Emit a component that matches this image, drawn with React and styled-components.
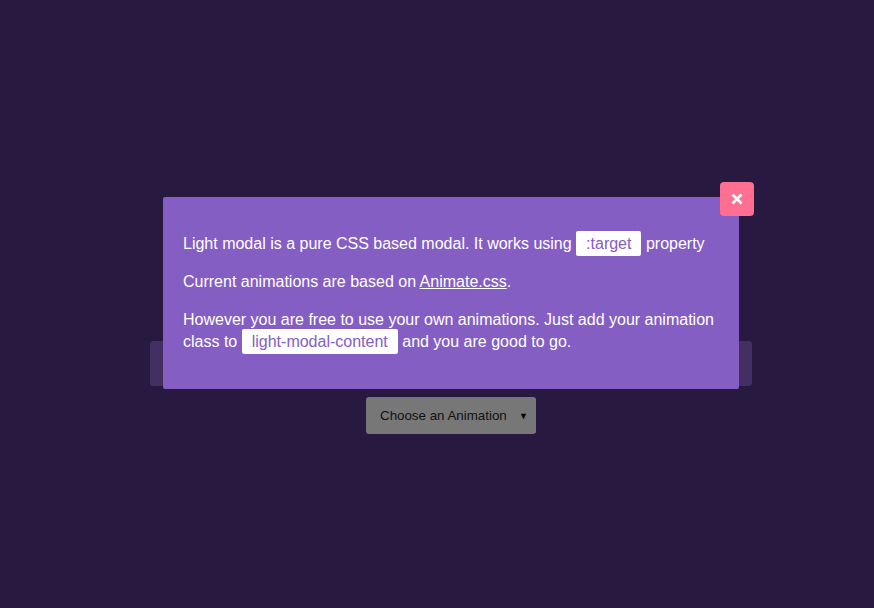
import styled, { createGlobalStyle } from 'styled-components';

const GlobalStyle = createGlobalStyle`
    html, body {
        margin: 0;
        padding: 0;
        height: 100%;
    }
    body {
        background: #27193f;
        font-family: "Liberation Sans", Arial, sans-serif;
    }
`;

const Page = styled.div`
    min-height: 608px;
    display: flex;
    flex-direction: column;
    align-items: center;
    padding: 341px 0 0 28px;
    box-sizing: border-box;
`;

const Panel = styled.div`
    width: 602px;
    height: 45px;
    background: #432f63;
    border-radius: 3px;
`;

const Select = styled.div`
    margin-top: 11px;
    width: 170px;
    height: 37px;
    box-sizing: border-box;
    padding: 0 8px 0 14px;
    display: flex;
    align-items: center;
    background: #777777;
    border-radius: 3px;
    color: #111;
    font-size: 13.33px;
`;

const Caret = styled.span`
    margin-left: auto;
    font-size: 9px;
    color: #000;
`;

const Overlay = styled.div`
    position: fixed;
    inset: 0;
    display: flex;
    align-items: center;
    justify-content: center;
    padding: 0 0 23px 28px;
`;

const Modal = styled.div`
    position: relative;
    width: 576px;
    box-sizing: border-box;
    padding: 20px;
    background: #845ec2;
    border-radius: 2px;
    color: #fff;
    font-size: 16px;
    line-height: 22px;

    p {
        margin: 16px 0;
    }
`;

const Close = styled.a`
    position: absolute;
    top: -15px;
    right: -15px;
    width: 34px;
    height: 34px;
    border-radius: 4px;
    background: #ff6f91;
    display: flex;
    align-items: center;
    justify-content: center;
`;

const Code = styled.code`
    font-family: "Liberation Sans", Arial, sans-serif;
    background: #fff;
    color: #845ec2;
    padding: 4px 10px;
    border-radius: 2px;
`;

const Link = styled.a`
    color: #fff;
    text-decoration: underline;
`;

const App = () => {
    return (
        <>
            <GlobalStyle />
            <Page>
                <Panel />
                <Select>
                    <span>Choose an Animation</span>
                    <Caret>▼</Caret>
                </Select>
            </Page>
            <Overlay>
                <Modal>
                    <Close>
                        <svg width="12" height="12" viewBox="0 0 12 12">
                            <path d="M1.5 1.5 L10.5 10.5 M10.5 1.5 L1.5 10.5" stroke="#fff" strokeWidth="2.6" />
                        </svg>
                    </Close>
                    <p>
                        Light modal is a pure CSS based modal. It works using <Code>:target</Code> property
                    </p>
                    <p>
                        Current animations are based on <Link>Animate.css</Link>.
                    </p>
                    <p>
                        However you are free to use your own animations. Just add your animation class to{' '}
                        <Code>light-modal-content</Code> and you are good to go.
                    </p>
                </Modal>
            </Overlay>
        </>
    );
};

export default App;
